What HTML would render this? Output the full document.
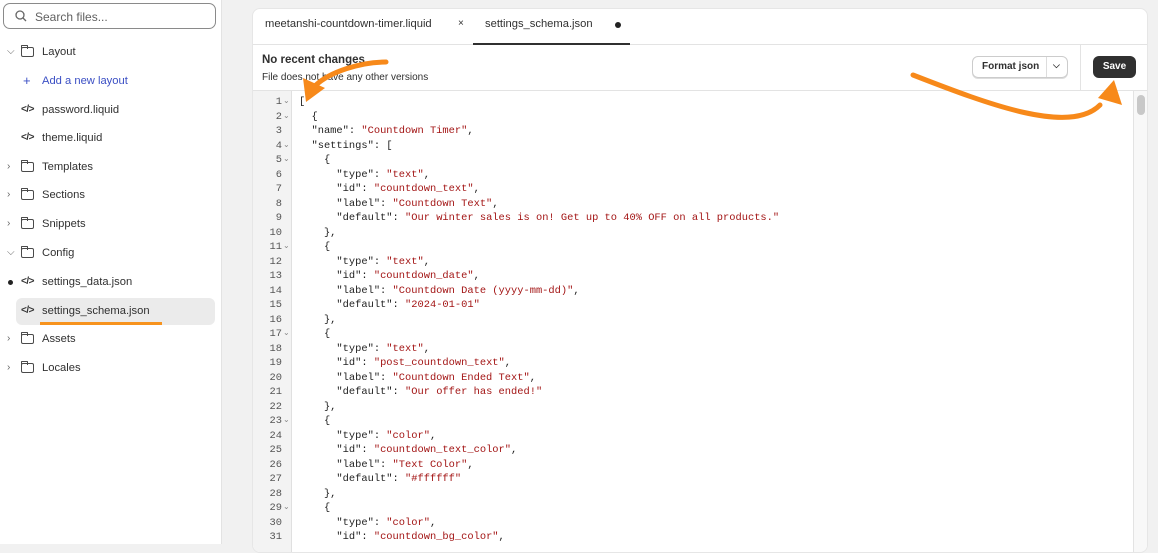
<!DOCTYPE html>
<html><head><meta charset="utf-8"><style>
*{margin:0;padding:0;box-sizing:border-box}
body{width:1158px;height:544px;overflow:hidden;background:#f1f1f1;font-family:"Liberation Sans",sans-serif;position:relative}
#side{position:absolute;left:0;top:0;width:222px;height:544px;background:#fff;border-right:1px solid #e3e3e3}
.search{position:absolute;left:3px;top:3px;width:213px;height:26px;border:1px solid #8a8a8a;border-radius:7px;font-size:12px;color:#616161;padding:6px 0 0 31px}
.search svg{position:absolute;left:11px;top:6px}
.it{position:absolute;left:0;font-size:11.2px;color:#303030;height:20px;line-height:20px}
.it .t{position:absolute;left:42px;white-space:nowrap}
.chev{position:absolute;left:7px;top:0;font-size:10px;color:#666}
.fold{position:absolute;left:21px;top:5px;width:13px;height:10px;border:1.3px solid #4a4a4a;border-radius:2px}
.fold:before{content:"";position:absolute;left:-1.3px;top:-3.5px;width:5px;height:3px;border:1.3px solid #4a4a4a;border-bottom:none;border-radius:1px 1px 0 0}
.code{position:absolute;left:21px;top:0;font-size:10px;color:#333;font-weight:bold;letter-spacing:-0.5px}
#card{position:absolute;left:252px;top:8px;width:896px;height:545px;background:#fff;border-radius:8px;overflow:hidden;border:1px solid #e6e6e6}
.tabs{position:absolute;left:0;top:0;width:100%;height:36px;border-bottom:1px solid #e3e3e3;font-size:11.2px;color:#303030}
.hdr{position:absolute;left:0;top:36px;width:100%;height:46px;border-bottom:1px solid #e3e3e3}
.gut{position:absolute;left:0;top:82px;width:39px;height:463px;background:#f3f3f3;border-right:1px solid #e0e0e0}
.ln{position:absolute;top:86px;font-family:"Liberation Mono",monospace;font-size:10.4px;line-height:14.5px;white-space:pre}
.nums{left:0;width:29px;text-align:right;color:#555}
.folds{left:30px;color:#888;font-size:8px}
.src{left:46px;color:#222}
.s{color:#a31515}
</style></head><body>
<div id="side">
 <div class="search"><svg width="12" height="12" viewBox="0 0 12 12"><circle cx="5" cy="5" r="4" fill="none" stroke="#666" stroke-width="1.3"/><path d="M8 8l3 3" stroke="#666" stroke-width="1.3"/></svg>Search files...</div>
 <div class="it" style="top:42px"><span class="chev">⌵</span><span class="fold"></span><span class="t">Layout</span></div>
 <div class="it" style="top:71px;color:#3b4fc4"><span style="position:absolute;left:23px;font-size:13px">+</span><span class="t">Add a new layout</span></div>
 <div class="it" style="top:100px"><span class="code">&lt;/&gt;</span><span class="t">password.liquid</span></div>
 <div class="it" style="top:128px"><span class="code">&lt;/&gt;</span><span class="t">theme.liquid</span></div>
 <div class="it" style="top:157px"><span class="chev">›</span><span class="fold"></span><span class="t">Templates</span></div>
 <div class="it" style="top:185px"><span class="chev">›</span><span class="fold"></span><span class="t">Sections</span></div>
 <div class="it" style="top:214px"><span class="chev">›</span><span class="fold"></span><span class="t">Snippets</span></div>
 <div class="it" style="top:243px"><span class="chev">⌵</span><span class="fold"></span><span class="t">Config</span></div>
 <div class="it" style="top:272px"><span style="position:absolute;left:8px;top:8px;width:5px;height:5px;border-radius:50%;background:#222"></span><span class="code">&lt;/&gt;</span><span class="t">settings_data.json</span></div>
 <div style="position:absolute;left:16px;top:298px;width:199px;height:27px;background:#ebebeb;border-radius:6px"></div>
 <div class="it" style="top:301px"><span class="code">&lt;/&gt;</span><span class="t">settings_schema.json</span></div>
 <div style="position:absolute;left:40px;top:322px;width:122px;height:3px;background:#f7931e"></div>
 <div class="it" style="top:329px"><span class="chev">›</span><span class="fold"></span><span class="t">Assets</span></div>
 <div class="it" style="top:358px"><span class="chev">›</span><span class="fold"></span><span class="t">Locales</span></div>
</div>
<div id="card">
 <div class="tabs">
  <span style="position:absolute;left:12px;top:9px">meetanshi-countdown-timer.liquid</span>
  <span style="position:absolute;left:205px;top:9px;font-size:10px">×</span>
  <span style="position:absolute;left:232px;top:9px">settings_schema.json</span>
  <span style="position:absolute;left:362px;top:13px;width:6px;height:6px;border-radius:50%;background:#222"></span>
  <span style="position:absolute;left:220px;top:34px;width:157px;height:2px;background:#303030"></span>
 </div>
 <div class="hdr">
  <div style="position:absolute;left:9px;top:9px;font-size:11.5px;font-weight:bold;color:#303030">No recent changes</div>
  <div style="position:absolute;left:9px;top:27px;font-size:10px;color:#303030">File does not have any other versions</div>
  <div style="position:absolute;left:719px;top:11px;width:96px;height:22px;border:1px solid #ccc;border-radius:6px;font-size:10px;font-weight:bold;color:#303030;box-shadow:0 1px 0 #ddd">
   <span style="position:absolute;left:9px;top:0;line-height:20px">Format json</span>
   <span style="position:absolute;left:73px;top:0;height:20px;border-left:1px solid #ddd"></span>
   <span style="position:absolute;left:80px;top:3px;font-size:9px">⌵</span></div>
  <div style="position:absolute;left:827px;top:0;height:46px;border-left:1px solid #e3e3e3"></div>
  <div style="position:absolute;left:840px;top:11px;width:43px;height:22px;background:#303030;border-radius:6px;color:#fff;font-size:10px;font-weight:bold;text-align:center;line-height:22px">Save</div>
 </div>
 <div class="gut"></div>
 <div style="position:absolute;left:880px;top:82px;width:15px;height:463px;background:#f8f8f8;border-left:1px solid #e3e3e3"><div style="position:absolute;left:3px;top:4px;width:8px;height:20px;background:#c8c8c8;border-radius:4px"></div></div>
 <div class="ln nums">1
2
3
4
5
6
7
8
9
10
11
12
13
14
15
16
17
18
19
20
21
22
23
24
25
26
27
28
29
30
31</div>
 <div class="ln folds">⌄
⌄

⌄
⌄





⌄





⌄





⌄





⌄</div>
 <div class="ln src">[
  {
  "name": <span class="s">"Countdown Timer"</span>,
  "settings": [
    {
      "type": <span class="s">"text"</span>,
      "id": <span class="s">"countdown_text"</span>,
      "label": <span class="s">"Countdown Text"</span>,
      "default": <span class="s">"Our winter sales is on! Get up to 40% OFF on all products."</span>
    },
    {
      "type": <span class="s">"text"</span>,
      "id": <span class="s">"countdown_date"</span>,
      "label": <span class="s">"Countdown Date (yyyy-mm-dd)"</span>,
      "default": <span class="s">"2024-01-01"</span>
    },
    {
      "type": <span class="s">"text"</span>,
      "id": <span class="s">"post_countdown_text"</span>,
      "label": <span class="s">"Countdown Ended Text"</span>,
      "default": <span class="s">"Our offer has ended!"</span>
    },
    {
      "type": <span class="s">"color"</span>,
      "id": <span class="s">"countdown_text_color"</span>,
      "label": <span class="s">"Text Color"</span>,
      "default": <span class="s">"#ffffff"</span>
    },
    {
      "type": <span class="s">"color"</span>,
      "id": <span class="s">"countdown_bg_color"</span>,</div>
</div>
<svg width="1158" height="544" style="position:absolute;left:0;top:0">
 <path d="M386 62 C360 62 330 72 316 85" fill="none" stroke="#f7891a" stroke-width="5" stroke-linecap="round"/>
 <path d="M306 102 L303 78 L325 88 Z" fill="#f7891a"/>
 <path d="M913 75 C990 105 1070 135 1100 105" fill="none" stroke="#f7891a" stroke-width="5" stroke-linecap="round"/>
 <path d="M1114 80 L1122 105 L1098 98 Z" fill="#f7891a"/>
</svg>
</body></html>
